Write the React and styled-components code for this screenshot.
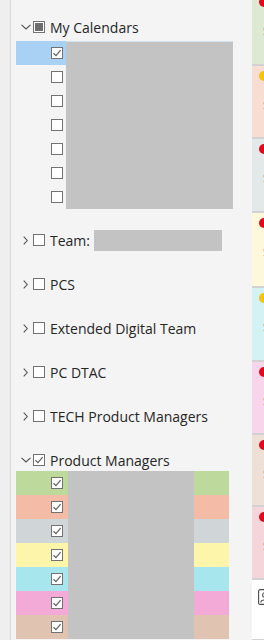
import React from 'react';
import styled, { createGlobalStyle } from 'styled-components';

const GlobalStyle = createGlobalStyle`
  html, body {
    margin: 0;
    padding: 0;
    background: #f4f4f4;
    overflow: hidden;
  }
  * {
    box-sizing: border-box;
  }
`;

const Frame = styled.div`
  display: flex;
  width: 264px;
  height: 640px;
  overflow: hidden;
  font-family: "Open Sans", "Noto Sans", sans-serif;
  color: #262626;
`;

const Gutter = styled.div`
  flex-shrink: 0;
  width: 11px;
  background: #efefef;
  border-right: 1px solid #d8d8d8;
`;

const Panel = styled.div`
  flex-shrink: 0;
  width: 241px;
  padding: 16px 0 0 5px;
  background: #f4f4f4;
`;

const GroupHeader = styled.div`
  display: flex;
  align-items: center;
  height: 22px;
  margin-top: ${(p) => p.$gap || 0}px;
  font-size: 14px;
  white-space: nowrap;
`;

const ChevronSlot = styled.span`
  display: flex;
  align-items: center;
  width: 17px;
  padding-left: ${(p) => (p.$open ? 5 : 7)}px;
`;

const Box = styled.span`
  display: inline-flex;
  align-items: center;
  justify-content: center;
  flex-shrink: 0;
  width: 12px;
  height: 12px;
  background: #fff;
  border: 1px solid #727272;
`;

const BoxFill = styled.span`
  width: 8px;
  height: 8px;
  background: #6d6d6d;
`;

const GroupName = styled.span`
  margin-left: 5px;
`;

const Redacted = styled.div`
  flex-shrink: 0;
  width: ${(p) => p.$w}px;
  height: ${(p) => p.$h}px;
  margin-left: ${(p) => p.$ml || 0}px;
  background: #c3c3c3;
  border-top: ${(p) => (p.$lit ? '1px solid #cfe2f1' : 'none')};
`;

const Children = styled.div`
  display: flex;
  margin-top: ${(p) => p.$gap || 0}px;
`;

const Column = styled.div`
  display: flex;
  flex-direction: column;
`;

const ChildRow = styled.div`
  display: flex;
  align-items: center;
  width: ${(p) => p.$w}px;
  height: 24px;
  padding-left: 35px;
  background: ${(p) => p.$bg || 'transparent'};
`;

const Swatch = styled.div`
  width: 35px;
  height: 24px;
  background: ${(p) => p.$bg};
`;

const Strip = styled.div`
  flex-shrink: 0;
  display: flex;
  flex-direction: column;
  gap: 2px;
  width: 40px;
  background: #d2d2d2;
`;

const Tile = styled.div`
  display: flex;
  flex-direction: column;
  flex-shrink: 0;
  height: ${(p) => p.$h}px;
  margin-top: ${(p) => p.$mt || 0}px;
  padding: 5px 0 0 7px;
  background: ${(p) => p.$bg};
`;

const Dot = styled.span`
  width: 10px;
  height: 10px;
  border-radius: 50%;
  background: ${(p) => p.$c};
`;

const TileLabel = styled.span`
  margin: 17px 0 0 4px;
  font-size: 10px;
  color: #8a8a8a;
  white-space: nowrap;
`;

const FootCell = styled.div`
  flex-shrink: 0;
  height: 60px;
  padding: 8px 0 0 6px;
  background: #fff;
  border-bottom: 1px solid #d2d2d2;
`;

const ChevronDown = () => (
  <svg width="10" height="6" viewBox="0 0 10 6">
    <polyline points="0.5,0.8 5,5 9.5,0.8" fill="none" stroke="#505050" strokeWidth="1.1" />
  </svg>
);

const ChevronRight = () => (
  <svg width="5" height="9" viewBox="0 0 5 9">
    <polyline points="0.7,0.6 4.3,4.5 0.7,8.4" fill="none" stroke="#505050" strokeWidth="1.1" />
  </svg>
);

const Check = () => (
  <svg width="10" height="10" viewBox="0 0 10 10">
    <polyline points="1.5,5.2 4,7.6 8.6,2.2" fill="none" stroke="#606060" strokeWidth="1.2" />
  </svg>
);

const CheckBox = ({ state }) => (
  <Box>
    {state === 'checked' && <Check />}
    {state === 'partial' && <BoxFill />}
  </Box>
);

const ContactIcon = () => (
  <svg width="14" height="16" viewBox="0 0 14 16">
    <rect x="0.6" y="0.6" width="12.8" height="14.8" rx="1.5" fill="none" stroke="#4a4a4a" strokeWidth="1.1" />
    <circle cx="7" cy="6" r="2.4" fill="none" stroke="#4a4a4a" strokeWidth="1.1" />
    <path d="M2.6 13.4 C3.4 10.2 10.6 10.2 11.4 13.4" fill="none" stroke="#4a4a4a" strokeWidth="1.1" />
  </svg>
);

const groups = [
  { name: 'Team:', redact: true },
  { name: 'PCS' },
  { name: 'Extended Digital Team' },
  { name: 'PC DTAC' },
  { name: 'TECH Product Managers' },
];

const managerColors = [
  '#bdd99c',
  '#f4bba6',
  '#d0d5d8',
  '#fdf6aa',
  '#a8e6ed',
  '#f4aad7',
  '#e0c3b0',
];

const tiles = [
  { bg: '#dde9d2', dot: '#e2081c', h: 72, mt: -8 },
  { bg: '#f8ddd3', dot: '#f2c40f', h: 71 },
  { bg: '#e3e8e9', dot: '#e2081c', h: 72 },
  { bg: '#fdf8db', dot: '#e2081c', h: 73 },
  { bg: '#d4f1f4', dot: '#f2c40f', h: 72 },
  { bg: '#f9d5eb', dot: '#e2081c', h: 71 },
  { bg: '#eee0d7', dot: '#e2081c', h: 70 },
  { bg: '#f5d4da', dot: '#e2081c', h: 71 },
];

const App = () => {
  return (
    <Frame>
      <GlobalStyle />
      <Gutter />
      <Panel>
        <GroupHeader>
          <ChevronSlot $open>
            <ChevronDown />
          </ChevronSlot>
          <CheckBox state="partial" />
          <GroupName>My Calendars</GroupName>
        </GroupHeader>

        <Children $gap={3}>
          <Column>
            {[0, 1, 2, 3, 4, 5, 6].map((i) => (
              <ChildRow key={i} $w={50} $bg={i === 0 ? '#a9d1f3' : undefined}>
                <CheckBox state={i === 0 ? 'checked' : 'empty'} />
              </ChildRow>
            ))}
          </Column>
          <Redacted $w={167} $h={168} $lit />
        </Children>

        {groups.map((g, i) => (
          <GroupHeader key={g.name} $gap={i === 0 ? 20 : 22}>
            <ChevronSlot>
              <ChevronRight />
            </ChevronSlot>
            <CheckBox state="empty" />
            <GroupName>{g.name}</GroupName>
            {g.redact && <Redacted $w={128} $h={21} $ml={4} />}
          </GroupHeader>
        ))}

        <GroupHeader $gap={22}>
          <ChevronSlot $open>
            <ChevronDown />
          </ChevronSlot>
          <CheckBox state="checked" />
          <GroupName>Product Managers</GroupName>
        </GroupHeader>

        <Children>
          <Column>
            {managerColors.map((c) => (
              <ChildRow key={c} $w={52} $bg={c}>
                <CheckBox state="checked" />
              </ChildRow>
            ))}
          </Column>
          <Redacted $w={126} $h={168} />
          <Column>
            {managerColors.map((c) => (
              <Swatch key={c} $bg={c} />
            ))}
          </Column>
        </Children>
      </Panel>

      <Strip>
        {tiles.map((t, i) => (
          <Tile key={i} $bg={t.bg} $h={t.h} $mt={t.mt}>
            <Dot $c={t.dot} />
            <TileLabel>Sync</TileLabel>
          </Tile>
        ))}
        <FootCell>
          <ContactIcon />
        </FootCell>
      </Strip>
    </Frame>
  );
};

export default App;
